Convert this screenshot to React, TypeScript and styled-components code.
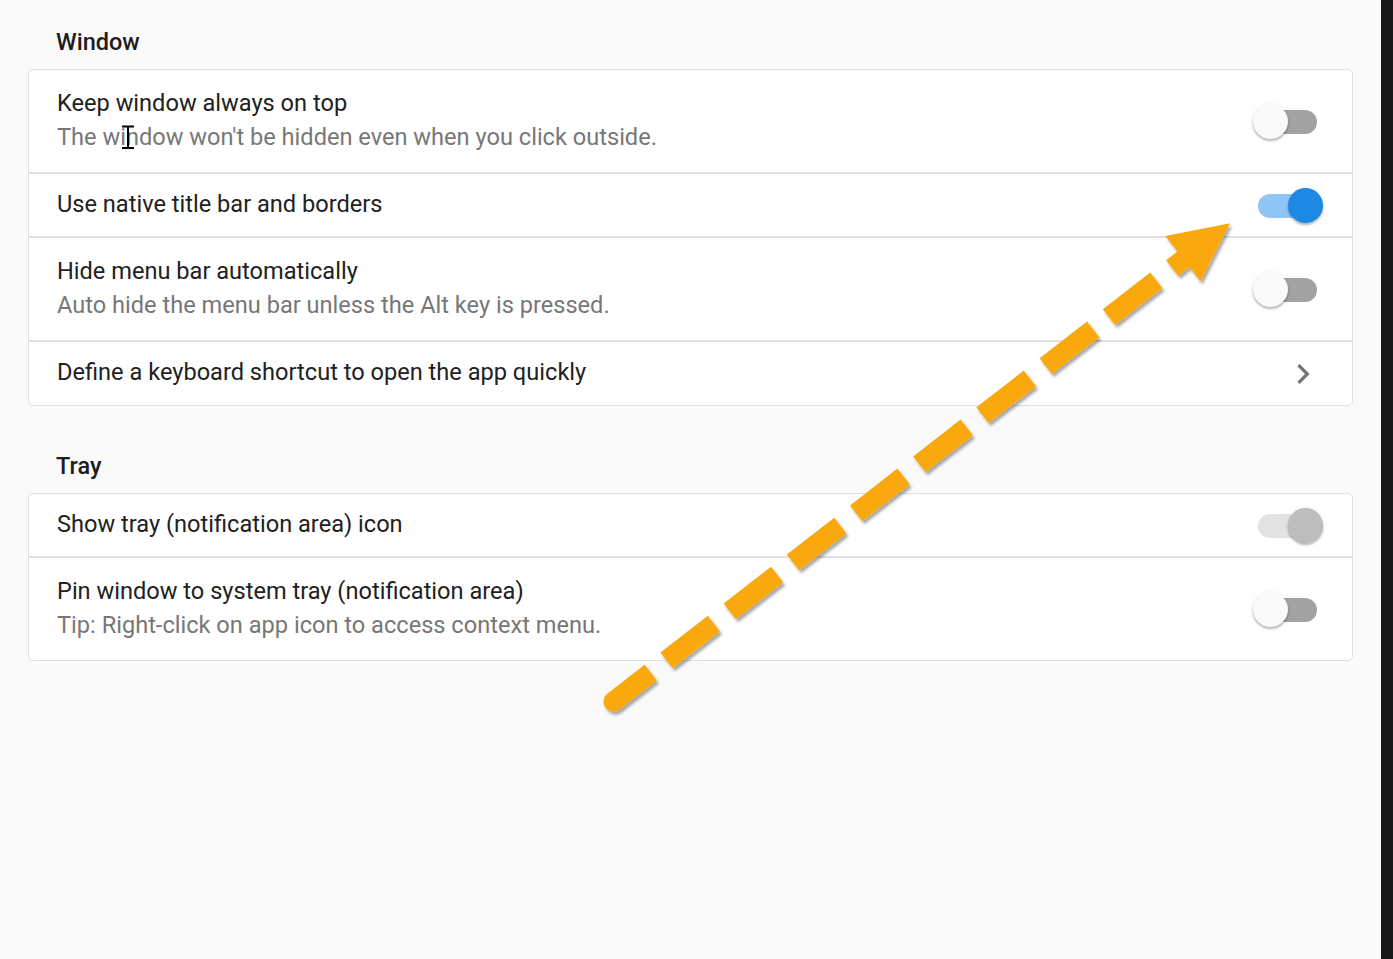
import styled, { createGlobalStyle } from 'styled-components'

const GlobalStyle = createGlobalStyle`
  html, body {
    margin: 0;
    padding: 0;
    background: #fafafa;
  }
  body {
    font-family: Roboto, 'Liberation Sans', sans-serif;
    color: #212121;
  }
`

const Page = styled.div`
  display: flex;
  min-height: 959px;
  position: relative;
  overflow: hidden;
`

const Main = styled.main`
  flex: 1;
  padding: 27px 28px 0;
`

const EdgeStrip = styled.div`
  width: 12px;
  background: #171717;
`

const Section = styled.section`
  & + & {
    margin-top: 45px;
  }
`

const SectionTitle = styled.h2`
  margin: 0;
  padding: 0 0 12px 28px;
  font-size: 23.5px;
  line-height: 30px;
  font-weight: 500;
  color: #1d1d1d;
`

const Card = styled.div`
  background: #fff;
  border: 1px solid #e0e0e0;
  border-radius: 5px;
  overflow: hidden;
`

const Row = styled.div<{ $twoLine?: boolean }>`
  display: flex;
  align-items: center;
  min-height: ${({ $twoLine }) => ($twoLine ? 104 : 64)}px;
  padding: 0 29px 0 28px;
  box-sizing: border-box;
  border-bottom: 2px solid #e0e0e0;
  &:last-child {
    border-bottom: 0;
    min-height: ${({ $twoLine }) => ($twoLine ? 102 : 63)}px;
  }
`

const RowText = styled.div`
  flex: 1;
  display: flex;
  flex-direction: column;
  padding-bottom: 3px;
`

const Primary = styled.span`
  font-size: 23.6px;
  line-height: 34px;
  color: #212121;
`

const Secondary = styled.span`
  font-size: 23.6px;
  line-height: 34px;
  color: #777;
`

const SwitchRoot = styled.span`
  position: relative;
  display: inline-block;
  width: 70px;
  height: 35px;
  flex: none;
`

const SwitchTrack = styled.span<{ $on: boolean; $disabled: boolean }>`
  position: absolute;
  left: 5px;
  top: 6px;
  width: 59px;
  height: 24px;
  border-radius: 12px;
  background: ${({ $on, $disabled }) =>
    $disabled ? '#e3e3e3' : $on ? '#90c6f6' : '#a2a2a2'};
`

const SwitchThumb = styled.span<{ $on: boolean; $disabled: boolean }>`
  position: absolute;
  top: 0;
  left: ${({ $on }) => ($on ? 35 : 0)}px;
  width: 35px;
  height: 35px;
  border-radius: 50%;
  background: ${({ $on, $disabled }) =>
    $disabled ? '#bdbdbd' : $on ? '#1e88e5' : '#fafafa'};
  box-shadow: 0 2px 2px rgba(0, 0, 0, 0.22), 0 1px 4px rgba(0, 0, 0, 0.12);
`

const Chevron = styled.svg`
  width: 40px;
  height: 40px;
  flex: none;
  fill: #757575;
`

const Overlay = styled.svg`
  position: absolute;
  left: 0;
  top: 0;
  width: 1393px;
  height: 959px;
  pointer-events: none;
`

interface ToggleProps {
  on?: boolean
  disabled?: boolean
}

const Toggle = ({ on = false, disabled = false }: ToggleProps) => (
  <SwitchRoot>
    <SwitchTrack $on={on} $disabled={disabled} />
    <SwitchThumb $on={on} $disabled={disabled} />
  </SwitchRoot>
)

type Item = {
  title: string
  subtitle?: string
  control: 'off' | 'on' | 'disabled' | 'chevron'
}

const windowItems: Item[] = [
  {
    title: 'Keep window always on top',
    subtitle: "The window won't be hidden even when you click outside.",
    control: 'off',
  },
  { title: 'Use native title bar and borders', control: 'on' },
  {
    title: 'Hide menu bar automatically',
    subtitle: 'Auto hide the menu bar unless the Alt key is pressed.',
    control: 'off',
  },
  { title: 'Define a keyboard shortcut to open the app quickly', control: 'chevron' },
]

const trayItems: Item[] = [
  { title: 'Show tray (notification area) icon', control: 'disabled' },
  {
    title: 'Pin window to system tray (notification area)',
    subtitle: 'Tip: Right-click on app icon to access context menu.',
    control: 'off',
  },
]

const renderControl = (control: Item['control']) => {
  if (control === 'chevron') {
    return (
      <Chevron viewBox="0 0 24 24">
        <path d="M10 6L8.59 7.41 13.17 12l-4.58 4.59L10 18l6-6z" />
      </Chevron>
    )
  }
  return <Toggle on={control !== 'off'} disabled={control === 'disabled'} />
}

const renderRows = (items: Item[]) =>
  items.map(({ title, subtitle, control }) => (
    <Row key={title} $twoLine={!!subtitle}>
      <RowText>
        <Primary>{title}</Primary>
        {subtitle && <Secondary>{subtitle}</Secondary>}
      </RowText>
      {renderControl(control)}
    </Row>
  ))

// dashed arrow drawn along one axis
const P0 = { x: 613, y: 702 }
const U = { x: 0.79, y: -0.613 }
const N = { x: 0.613, y: 0.79 }
const pt = (s: number, t = 0) =>
  `${(P0.x + s * U.x + t * N.x).toFixed(1)},${(P0.y + s * U.y + t * N.y).toFixed(1)}`

const dashes = [97.8, 177.8, 257.8, 337.8, 417.8, 497.8, 577.8, 657.8]

const Arrow = () => (
  <Overlay viewBox="0 0 1393 959">
    <defs>
      <filter id="arrowShadow" x="-10%" y="-10%" width="120%" height="120%">
        <feDropShadow dx="2" dy="3" stdDeviation="1.6" floodColor="#000" floodOpacity="0.35" />
      </filter>
    </defs>
    <g fill="#f9a80c" stroke="none" filter="url(#arrowShadow)">
      <path
        d={`M${pt(0, -10)} L${pt(47.8, -10)} L${pt(47.8, 10)} L${pt(0, 10)} A10 10 0 0 1 ${pt(0, -10)} Z`}
      />
      {dashes.map((c) => (
        <polygon
          key={c}
          points={`${pt(c - 30, -10)} ${pt(c + 30, -10)} ${pt(c + 30, 10)} ${pt(c - 30, 10)}`}
        />
      ))}
      <polygon
        points={`${pt(707.8, -10)} ${pt(722, -10)} ${pt(722, -29.5)} ${pt(781, 0)} ${pt(722, 28)} ${pt(722, 10)} ${pt(707.8, 10)}`}
      />
    </g>
    <g stroke="#000" strokeWidth="2" fill="none">
      <path d="M122 126.5 H134 M128 126.5 V148 M122 148 H134" />
    </g>
  </Overlay>
)

export default function App() {
  return (
    <>
      <GlobalStyle />
      <Page>
        <Main>
          <Section>
            <SectionTitle>Window</SectionTitle>
            <Card>{renderRows(windowItems)}</Card>
          </Section>
          <Section>
            <SectionTitle>Tray</SectionTitle>
            <Card>{renderRows(trayItems)}</Card>
          </Section>
        </Main>
        <EdgeStrip />
        <Arrow />
      </Page>
    </>
  )
}
